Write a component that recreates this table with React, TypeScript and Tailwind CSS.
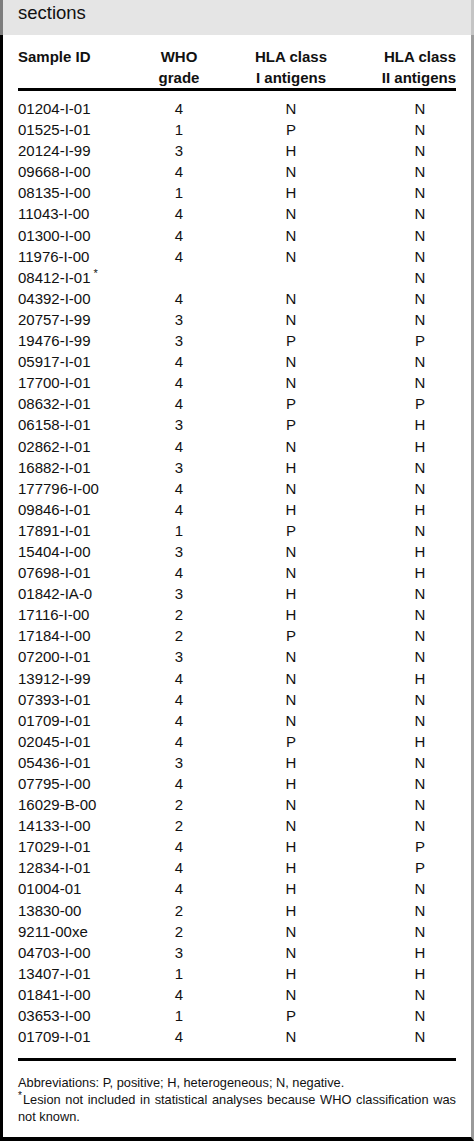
type Row = [string, string, string, string];

const rows: Row[] = [
  ['01204-I-01', '4', 'N', 'N'],
  ['01525-I-01', '1', 'P', 'N'],
  ['20124-I-99', '3', 'H', 'N'],
  ['09668-I-00', '4', 'N', 'N'],
  ['08135-I-00', '1', 'H', 'N'],
  ['11043-I-00', '4', 'N', 'N'],
  ['01300-I-00', '4', 'N', 'N'],
  ['11976-I-00', '4', 'N', 'N'],
  ['08412-I-01*', '', '', 'N'],
  ['04392-I-00', '4', 'N', 'N'],
  ['20757-I-99', '3', 'N', 'N'],
  ['19476-I-99', '3', 'P', 'P'],
  ['05917-I-01', '4', 'N', 'N'],
  ['17700-I-01', '4', 'N', 'N'],
  ['08632-I-01', '4', 'P', 'P'],
  ['06158-I-01', '3', 'P', 'H'],
  ['02862-I-01', '4', 'N', 'H'],
  ['16882-I-01', '3', 'H', 'N'],
  ['177796-I-00', '4', 'N', 'N'],
  ['09846-I-01', '4', 'H', 'H'],
  ['17891-I-01', '1', 'P', 'N'],
  ['15404-I-00', '3', 'N', 'H'],
  ['07698-I-01', '4', 'N', 'H'],
  ['01842-IA-0', '3', 'H', 'N'],
  ['17116-I-00', '2', 'H', 'N'],
  ['17184-I-00', '2', 'P', 'N'],
  ['07200-I-01', '3', 'N', 'N'],
  ['13912-I-99', '4', 'N', 'H'],
  ['07393-I-01', '4', 'N', 'N'],
  ['01709-I-01', '4', 'N', 'N'],
  ['02045-I-01', '4', 'P', 'H'],
  ['05436-I-01', '3', 'H', 'N'],
  ['07795-I-00', '4', 'H', 'N'],
  ['16029-B-00', '2', 'N', 'N'],
  ['14133-I-00', '2', 'N', 'N'],
  ['17029-I-01', '4', 'H', 'P'],
  ['12834-I-01', '4', 'H', 'P'],
  ['01004-01', '4', 'H', 'N'],
  ['13830-00', '2', 'H', 'N'],
  ['9211-00xe', '2', 'N', 'N'],
  ['04703-I-00', '3', 'N', 'H'],
  ['13407-I-01', '1', 'H', 'H'],
  ['01841-I-00', '4', 'N', 'N'],
  ['03653-I-00', '1', 'P', 'N'],
  ['01709-I-01', '4', 'N', 'N'],
];

function SampleId({ id }: { id: string }) {
  if (!id.endsWith('*')) return <>{id}</>;
  return (
    <>
      {id.slice(0, -1)}
      <sup className="ml-[3px] text-[11px]">*</sup>
    </>
  );
}

export default function App() {
  return (
    <div className="h-[1142px] w-[474px] overflow-hidden bg-white font-['Liberation_Sans',Arial,sans-serif] text-[#111]">
      <div className="h-[35px] border-l-[3px] border-r-[3px] border-l-[#7d7d7d] border-r-[#c4c4c4] bg-[#e5e5e5] pl-[15px] pt-[2px] text-[18.5px] leading-[22px]">
        sections
      </div>

      <div className="border-b-[4px] border-l-[3px] border-r-[3px] border-b-black border-l-black border-r-[#9a9a9a] px-[15px] pb-[12px] pt-[11px]">
        <div className="grid grid-cols-[122px_78px_146px_92px] border-b-[3px] border-black text-[15px] font-bold leading-[21px]">
          <div>Sample ID</div>
          <div className="text-center">
            WHO
            <br />
            grade
          </div>
          <div className="text-center">
            HLA class
            <br />I antigens
          </div>
          <div className="text-right">
            HLA class
            <br />
            II antigens
          </div>
        </div>

        <div className="pt-[7px] text-[15px] leading-[21.1px]">
          {rows.map((r, i) => (
            <div key={i} className="grid grid-cols-[122px_78px_146px_92px]">
              <div className="whitespace-nowrap">
                <SampleId id={r[0]} />
              </div>
              <div className="text-center">{r[1]}</div>
              <div className="text-center">{r[2]}</div>
              <div className="pl-[20px] text-center">{r[3]}</div>
            </div>
          ))}
        </div>

        <div className="mt-[11px] h-[3px] bg-black" />

        <div className="pt-[14px] text-[12.8px] leading-[16.7px]">
          <p>Abbreviations: P, positive; H, heterogeneous; N, negative.</p>
          <p className="text-justify">
            <sup className="mr-[1px] text-[10px]">*</sup>Lesion not included in statistical analyses because WHO
            classification was not known.
          </p>
        </div>
      </div>
    </div>
  );
}
